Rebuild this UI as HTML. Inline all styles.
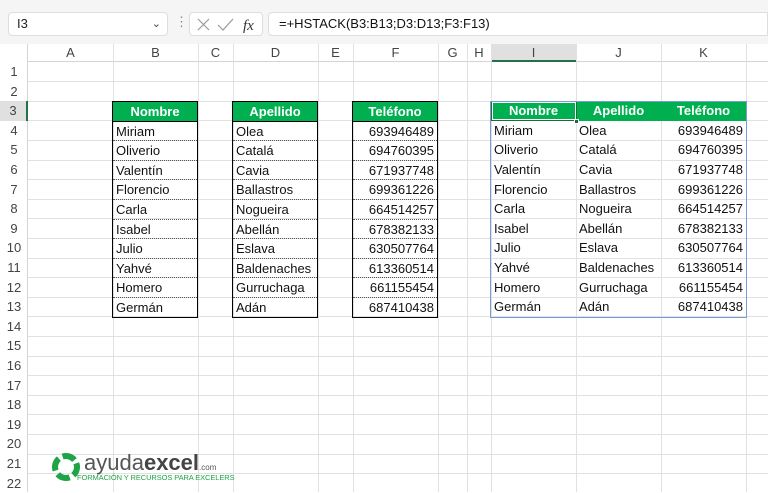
<!DOCTYPE html>
<html><head><meta charset="utf-8"><style>
*{margin:0;padding:0;box-sizing:border-box}
body{width:768px;height:492px;overflow:hidden;background:#fff;font-family:"Liberation Sans",Arial,sans-serif;position:relative}
.a{position:absolute}
#top{left:0;top:0;width:768px;height:44px;background:#f5f5f5}
.vl{position:absolute;top:44px;height:448px;width:1px;background:#e1e1e1}
.hl{position:absolute;left:28px;width:740px;height:1px;background:#e1e1e1}
.ch{position:absolute;top:44px;height:18px;text-align:center;font-size:13px;color:#444;line-height:18px}
.rh{position:absolute;left:0;width:28px;text-align:center;font-size:13px;color:#444;line-height:19.6px;height:19.6px}
.tb{position:absolute;width:86px;border:1px solid #000;font-size:13px}
.tb div{height:19.6px;line-height:19px;padding:0 3px;border-bottom:1px dotted #555;color:#111;white-space:nowrap}
.tb div:last-child{border-bottom:none}
.tb .h{background:#00b050;color:#fff;font-weight:bold;text-align:center;border-bottom:1px solid #000}
.r{text-align:right}
.sp{font-size:13px;color:#111}
.sp div{position:absolute;height:19.6px;line-height:19.6px;white-space:nowrap}
</style></head><body>
<div id="top" class="a"></div>
<div class="a" style="left:8px;top:12px;width:160px;height:24px;background:#fff;border:1px solid #ddd;border-radius:4px;font-size:13px;line-height:22px;padding-left:8px;color:#222">I3<span style="position:absolute;right:6px;top:0;color:#444;font-size:11px">&#8964;</span></div>
<div class="a" style="left:175px;top:14px;color:#888;font-size:13px">&#8942;</div>
<div class="a" style="left:189px;top:12px;width:74px;height:24px;background:#fff;border:1px solid #ddd;border-radius:4px">
<svg width="74" height="24"><path d="M8 6l11 11M19 6L8 17" stroke="#999" stroke-width="1.2" fill="none"/><path d="M28 12l5 5 10-11" stroke="#999" stroke-width="1.2" fill="none"/><text x="53" y="17" font-family="Liberation Serif" font-style="italic" font-size="15" fill="#333">fx</text></svg></div>
<div class="a" style="left:268px;top:12px;width:500px;height:24px;background:#fff;border:1px solid #ddd;border-radius:4px 0 0 4px;font-size:13px;line-height:22px;padding-left:10px;color:#111">=+HSTACK(B3:B13;D3:D13;F3:F13)</div>

<div class="a" style="left:0;top:44px;width:768px;height:448px;background:#fff"></div>
<div class="a" style="left:0;top:44px;width:768px;height:18px;background:#fff;border-bottom:1px solid #d4d4d4"></div>
<div class="a" style="left:0;top:44px;width:28px;height:448px;background:#fff;border-right:1px solid #d4d4d4"></div>
<div class="a" style="left:491px;top:44px;width:85px;height:18px;background:#e0e0e0;border-bottom:2px solid #217346"></div>
<div class="hl" style="top:81px"></div><div class="hl" style="top:101px"></div><div class="hl" style="top:120px"></div><div class="hl" style="top:140px"></div><div class="hl" style="top:160px"></div><div class="hl" style="top:179px"></div><div class="hl" style="top:199px"></div><div class="hl" style="top:218px"></div><div class="hl" style="top:238px"></div><div class="hl" style="top:258px"></div><div class="hl" style="top:277px"></div><div class="hl" style="top:297px"></div><div class="hl" style="top:316px"></div><div class="hl" style="top:336px"></div><div class="hl" style="top:356px"></div><div class="hl" style="top:375px"></div><div class="hl" style="top:395px"></div><div class="hl" style="top:414px"></div><div class="hl" style="top:434px"></div><div class="hl" style="top:454px"></div><div class="hl" style="top:473px"></div>
<div class="vl" style="left:113px"></div><div class="vl" style="left:198px"></div><div class="vl" style="left:233px"></div><div class="vl" style="left:318px"></div><div class="vl" style="left:353px"></div><div class="vl" style="left:438px"></div><div class="vl" style="left:467px"></div><div class="vl" style="left:491px"></div><div class="vl" style="left:576px"></div><div class="vl" style="left:661px"></div><div class="vl" style="left:746px"></div>
<div class="ch" style="left:28px;width:85px">A</div><div class="ch" style="left:113px;width:85px">B</div><div class="ch" style="left:198px;width:35px">C</div><div class="ch" style="left:233px;width:85px">D</div><div class="ch" style="left:318px;width:35px">E</div><div class="ch" style="left:353px;width:85px">F</div><div class="ch" style="left:438px;width:29px">G</div><div class="ch" style="left:467px;width:24px">H</div><div class="ch" style="left:491px;width:85px">I</div><div class="ch" style="left:576px;width:85px">J</div><div class="ch" style="left:661px;width:85px">K</div>
<div class="rh" style="top:62px">1</div><div class="rh" style="top:81.6px">2</div><div class="rh" style="top:101.2px;background:#e0e0e0;border-right:2px solid #217346">3</div><div class="rh" style="top:120.8px">4</div><div class="rh" style="top:140.4px">5</div><div class="rh" style="top:160px">6</div><div class="rh" style="top:179.6px">7</div><div class="rh" style="top:199.2px">8</div><div class="rh" style="top:218.8px">9</div><div class="rh" style="top:238.4px">10</div><div class="rh" style="top:258px">11</div><div class="rh" style="top:277.6px">12</div><div class="rh" style="top:297.2px">13</div><div class="rh" style="top:316.8px">14</div><div class="rh" style="top:336.4px">15</div><div class="rh" style="top:356px">16</div><div class="rh" style="top:375.6px">17</div><div class="rh" style="top:395.2px">18</div><div class="rh" style="top:414.8px">19</div><div class="rh" style="top:434.4px">20</div><div class="rh" style="top:454px">21</div><div class="rh" style="top:473.6px">22</div>

<div class="tb" style="left:112px;top:101px;height:217px"><div class="h">Nombre</div><div>Miriam</div><div>Oliverio</div><div>Valentín</div><div>Florencio</div><div>Carla</div><div>Isabel</div><div>Julio</div><div>Yahvé</div><div>Homero</div><div>Germán</div></div>
<div class="tb" style="left:232px;top:101px;height:217px"><div class="h">Apellido</div><div>Olea</div><div>Catalá</div><div>Cavia</div><div>Ballastros</div><div>Nogueira</div><div>Abellán</div><div>Eslava</div><div>Baldenaches</div><div>Gurruchaga</div><div>Adán</div></div>
<div class="tb" style="left:352px;top:101px;height:217px"><div class="h">Teléfono</div><div class="r">693946489</div><div class="r">694760395</div><div class="r">671937748</div><div class="r">699361226</div><div class="r">664514257</div><div class="r">678382133</div><div class="r">630507764</div><div class="r">613360514</div><div class="r">661155454</div><div class="r">687410438</div></div>

<div class="a" style="left:491px;top:101.2px;width:255px;height:19.6px;background:#00b050"></div>
<div class="a" style="left:491px;top:101.2px;width:86px;height:20px;border:1.5px solid #1e6b3e;box-shadow:inset 0 0 0 1px #fff"></div>
<div class="a" style="left:574px;top:119px;width:5px;height:5px;background:#1e6b3e;border:1px solid #fff"></div>
<div class="a" style="left:490px;top:101px;width:257px;height:217px;border:1px solid #7b9bd6"></div>
<div class="sp">
<div style="left:491px;top:101.2px;width:85px;text-align:center;color:#fff;font-weight:bold">Nombre</div>
<div style="left:576px;top:101.2px;width:85px;text-align:center;color:#fff;font-weight:bold">Apellido</div>
<div style="left:661px;top:101.2px;width:85px;text-align:center;color:#fff;font-weight:bold">Teléfono</div>
<div style="left:494px;top:120.8px">Miriam</div><div style="left:579px;top:120.8px">Olea</div><div style="left:661px;top:120.8px;width:82px;text-align:right">693946489</div>
<div style="left:494px;top:140.4px">Oliverio</div><div style="left:579px;top:140.4px">Catalá</div><div style="left:661px;top:140.4px;width:82px;text-align:right">694760395</div>
<div style="left:494px;top:160px">Valentín</div><div style="left:579px;top:160px">Cavia</div><div style="left:661px;top:160px;width:82px;text-align:right">671937748</div>
<div style="left:494px;top:179.6px">Florencio</div><div style="left:579px;top:179.6px">Ballastros</div><div style="left:661px;top:179.6px;width:82px;text-align:right">699361226</div>
<div style="left:494px;top:199.2px">Carla</div><div style="left:579px;top:199.2px">Nogueira</div><div style="left:661px;top:199.2px;width:82px;text-align:right">664514257</div>
<div style="left:494px;top:218.8px">Isabel</div><div style="left:579px;top:218.8px">Abellán</div><div style="left:661px;top:218.8px;width:82px;text-align:right">678382133</div>
<div style="left:494px;top:238.4px">Julio</div><div style="left:579px;top:238.4px">Eslava</div><div style="left:661px;top:238.4px;width:82px;text-align:right">630507764</div>
<div style="left:494px;top:258px">Yahvé</div><div style="left:579px;top:258px">Baldenaches</div><div style="left:661px;top:258px;width:82px;text-align:right">613360514</div>
<div style="left:494px;top:277.6px">Homero</div><div style="left:579px;top:277.6px">Gurruchaga</div><div style="left:661px;top:277.6px;width:82px;text-align:right">661155454</div>
<div style="left:494px;top:297.2px">Germán</div><div style="left:579px;top:297.2px">Adán</div><div style="left:661px;top:297.2px;width:82px;text-align:right">687410438</div>
</div>

<svg class="a" style="left:51px;top:452px" width="30" height="30"><circle cx="15" cy="15" r="11" stroke="#1fa347" stroke-width="6" fill="none" stroke-dasharray="13 4.3" transform="rotate(-20 15 15)"/></svg>
<div class="a" style="left:84px;top:451px;font-size:22px;color:#555;line-height:24px;white-space:nowrap">ayuda<b style="color:#444">excel</b><span style="font-size:8px">.com</span></div>
<div class="a" style="left:77px;top:474px;font-size:7.5px;color:#1fa347;white-space:nowrap;line-height:8px;letter-spacing:-0.1px">FORMACIÓN Y RECURSOS PARA EXCELERS</div>
</body></html>
